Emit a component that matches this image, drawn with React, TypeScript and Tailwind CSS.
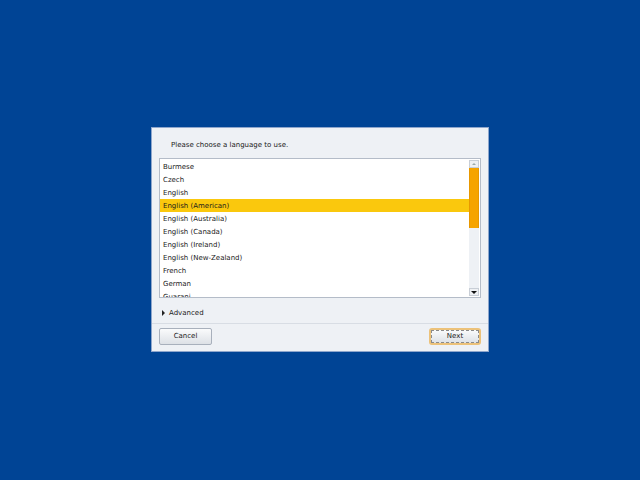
import React from "react";

const items = [
  "Burmese",
  "Czech",
  "English",
  "English (American)",
  "English (Australia)",
  "English (Canada)",
  "English (Ireland)",
  "English (New-Zealand)",
  "French",
  "German",
  "Guarani",
];

export default function App() {
  return (
    <div
      className="w-[640px] h-[480px] bg-[#004495] flex items-start justify-center"
      style={{ fontFamily: '"DejaVu Sans", sans-serif' }}
    >
      <div className="mt-[127px] w-[338px] h-[225px] bg-[#eef1f5] border border-[#8ea6cc] flex flex-col text-[#1a1a1a] text-[7px]">
        <div className="h-[30px] pl-[19px] flex items-center pt-[5px]">
          Please choose a language to use.
        </div>
        <div className="mx-[7px] h-[140px] bg-white border border-[#b4bcc8] flex">
          <div className="flex-1 overflow-hidden flex flex-col pt-[1px]">
            {items.map((it, i) => (
              <div
                key={it}
                className={
                  "h-[13px] shrink-0 flex items-center pl-[3px] pt-[2px] " +
                  (i === 3 ? "bg-[#fac80d]" : "")
                }
              >
                {it}
              </div>
            ))}
          </div>
          <div className="w-[11px] flex flex-col py-[1px] pr-[1px]">
            <div className="h-[8px] border border-[#c8ced6] bg-[#eef0f3] flex items-center justify-center">
              <div className="w-0 h-0 border-l-[2px] border-r-[2px] border-b-[2px] border-l-transparent border-r-transparent border-b-[#9aa]" />
            </div>
            <div className="h-[60px] bg-[#f6a400] border-x border-[#e89800]" />
            <div className="flex-1 bg-[#eef1f5]" />
            <div className="h-[8px] border border-[#c8ced6] bg-[#eef0f3] flex items-center justify-center">
              <div className="w-0 h-0 border-l-[3px] border-r-[3px] border-t-[3px] border-l-transparent border-r-transparent border-t-[#111]" />
            </div>
          </div>
        </div>
        <div className="h-[26px] flex items-center pl-[10px] gap-[4px] pt-[5px] border-b border-[#d8dde4]">
          <div className="w-0 h-0 mt-[-1px] border-t-[3px] border-b-[3px] border-l-[3px] border-t-transparent border-b-transparent border-l-[#222]" />
          <span>Advanced</span>
        </div>
        <div className="flex-1 flex items-start justify-between px-[7px] pt-[4px]">
          <div className="w-[53px] h-[17px] border border-[#a8b0bc] rounded-[2px] bg-gradient-to-b from-[#fafbfc] to-[#dde1e6] flex items-center justify-center">
            Cancel
          </div>
          <div className="w-[52px] h-[17px] border-2 border-[#ecc27a] rounded-[3px] bg-gradient-to-b from-[#fafbfc] to-[#dde1e6] flex">
            <div className="flex-1 border border-dashed border-[#8a8a8a] flex items-center justify-center">
              Next
            </div>
          </div>
        </div>
      </div>
    </div>
  );
}
